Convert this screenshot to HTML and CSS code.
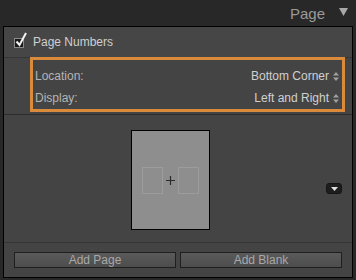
FILE: index.html
```html
<!DOCTYPE html>
<html lang="en">
<head>
    <meta charset="UTF-8">
    <meta name="viewport" content="width=device-width, initial-scale=1.0">
    <link rel="stylesheet" href="styles.css">
    <title>Page</title>
</head>
<body>
    <!-- Panel header -->
    <div class="header">
        <span class="header-title">Page</span>
        <svg class="header-arrow" width="9" height="8" viewBox="0 0 9 8"><path d="M0 0 H9 L4.5 8 Z" fill="#a8a8a8"/></svg>
    </div>

    <div class="panel">
        <div class="check-row">
            <span class="checkbox">
                <svg width="14" height="16" viewBox="0 0 14 16"><path d="M2.5 9.5 L5.5 13 L12 1" fill="none" stroke="#f2f2f2" stroke-width="2"/></svg>
            </span>
            <span class="check-label">Page Numbers</span>
        </div>

        <div class="options">
            <div class="highlight">
                <div class="option-row">
                    <span class="option-label">Location:</span>
                    <span class="option-value">Bottom Corner
                        <svg class="spin" width="6" height="9" viewBox="0 0 6 9"><path d="M0 3.5 L3 0 L6 3.5 Z M0 5.5 L3 9 L6 5.5 Z" fill="#a0a0a0"/></svg>
                    </span>
                </div>
                <div class="option-row">
                    <span class="option-label">Display:</span>
                    <span class="option-value">Left and Right
                        <svg class="spin" width="6" height="9" viewBox="0 0 6 9"><path d="M0 3.5 L3 0 L6 3.5 Z M0 5.5 L3 9 L6 5.5 Z" fill="#a0a0a0"/></svg>
                    </span>
                </div>
            </div>
        </div>

        <div class="preview">
            <div class="page-thumb">
                <div class="cell"></div>
                <svg class="plus" width="9" height="9" viewBox="0 0 9 9"><path d="M4.5 0 V9 M0 4.5 H9" stroke="#2c2c2c" stroke-width="1.2"/></svg>
                <div class="cell"></div>
            </div>
            <button class="menu-btn">
                <svg width="7" height="4" viewBox="0 0 7 4"><path d="M0 0 H7 L3.5 4 Z" fill="#e0e0e0"/></svg>
            </button>
        </div>

        <div class="actions">
            <button class="button">Add Page</button>
            <button class="button">Add Blank</button>
        </div>
    </div>
</body>
</html>
```

FILE: styles.css
```css
body {
    margin: 0;
    width: 356px;
    height: 280px;
    background-color: #282828;
    font-family: "Liberation Sans", Arial, sans-serif;
    font-size: 12px;
    overflow: hidden;
}

.header {
    height: 26px;
    display: flex;
    justify-content: flex-end;
    align-items: center;
    padding-right: 8px;
}
.header-title {
    font-size: 15px;
    color: #9a9a9a;
    margin-right: 14px;
    margin-top: 1px;
}
.header-arrow {
    margin-top: -2px;
}

.panel {
    margin: 0 3px 0 3px;
    border: 1px solid #000000;
    background-color: #444444;
}

.check-row {
    height: 30px;
    display: flex;
    align-items: center;
    padding-left: 10px;
    background-color: #464646;
}
.checkbox {
    position: relative;
    width: 8px;
    height: 8px;
    margin-top: 2px;
    background-color: #1a1a1a;
    border: 1px solid #8a8a8a;
}
.checkbox svg {
    position: absolute;
    left: -1px;
    top: -7px;
}
.check-label {
    margin-left: 9px;
    color: #cfcfcf;
}

.options {
    border-top: 1px solid #363636;
    border-bottom: 1px solid #2c2c2c;
    padding: 0 7px 2px 26px;
}
.highlight {
    border: 3px solid #d98b3b;
    border-top-width: 3px;
    height: 44px;
    padding: 5px 3px 0 2px;
    margin-top: -1px;
}
.option-row {
    height: 22px;
    display: flex;
    justify-content: space-between;
    align-items: center;
}
.option-label {
    color: #b4b4b4;
}
.option-value {
    color: #d0d0d0;
    display: flex;
    align-items: center;
}
.spin {
    margin-left: 4px;
}

.preview {
    height: 127px;
    display: flex;
    border-bottom: 1px solid #353535;
}
.page-thumb {
    width: 77px;
    height: 98px;
    margin: 15px 0 0 127px;
    border: 1px solid #000000;
    background-color: #8e8e8e;
    display: flex;
    align-items: center;
    justify-content: center;
    gap: 3px;
}
.cell {
    width: 19px;
    height: 25px;
    margin-top: 1px;
    border: 1px solid #9c9c9c;
}
.menu-btn {
    width: 16px;
    height: 11px;
    margin: 68px 10px 0 auto;
    padding: 0;
    background-color: #1e1e1e;
    border: 1px solid #151515;
    border-radius: 3px;
    display: flex;
    align-items: center;
    justify-content: center;
}

.actions {
    display: flex;
    gap: 4px;
    padding: 9px 10px 9px 10px;
}
.button {
    flex: 1;
    height: 16px;
    padding: 0;
    background: linear-gradient(#5a5a5a, #4d4d4d);
    border: 1px solid #1f1f1f;
    color: #a8a8a8;
    font-family: "Liberation Sans", Arial, sans-serif;
    font-size: 12px;
    line-height: 14px;
}
```
